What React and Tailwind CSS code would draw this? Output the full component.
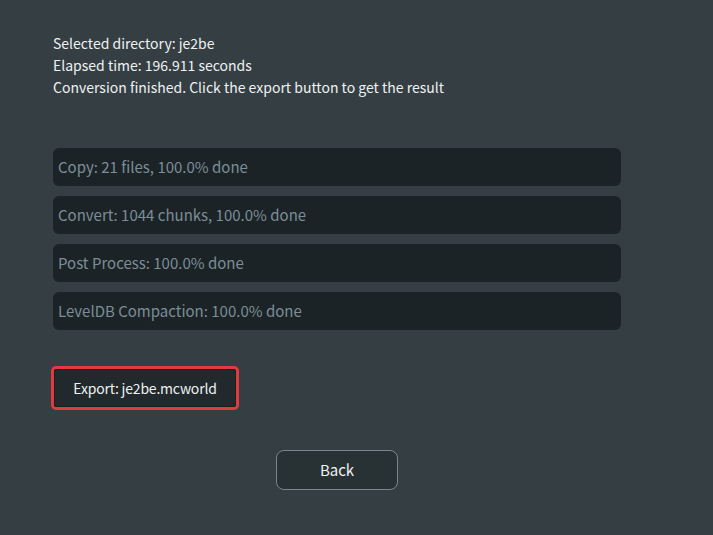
import React from 'react';

// Pasos de la conversión
const STEPS = [
  'Copy: 21 files, 100.0% done',
  'Convert: 1044 chunks, 100.0% done',
  'Post Process: 100.0% done',
  'LevelDB Compaction: 100.0% done',
];

const App = () => {
  return (
    <div
      className="w-[713px] h-[535px] bg-[#353f43] text-[#eef1f2] text-[14px] overflow-hidden"
      style={{ fontFamily: '"Noto Sans CJK JP", "Noto Sans", sans-serif' }}
    >
      <div className="pl-[53px] pt-[32px]">
        {/* Estado */}
        <div className="leading-[22px]">
          <div>Selected directory: je2be</div>
          <div>Elapsed time: 196.911 seconds</div>
          <div>Conversion finished. Click the export button to get the result</div>
        </div>

        {/* Progreso */}
        <div className="mt-[50px] w-[568px] flex flex-col gap-[10px]">
          {STEPS.map((s) => (
            <div
              key={s}
              className="h-[38px] rounded-[6px] bg-[#1c2326] flex items-center px-[5px] text-[15px] text-[#7b8e98]"
            >
              {s}
            </div>
          ))}
        </div>

        {/* Exportar */}
        <div className="mt-[36px] -ml-[2px] w-[188px] h-[44px] rounded-[5px] border-[3px] border-[#e0393e]">
          <button className="w-full h-full bg-[#22292c] border border-[#1a1f21] rounded-[2px] text-[#eef1f2] text-[14px] tracking-[-0.2px]">
            Export: je2be.mcworld
          </button>
        </div>

        {/* Volver */}
        <div className="mt-[40px] w-[568px] flex justify-center">
          <button className="w-[122px] h-[40px] rounded-[8px] bg-[#283134] border border-[#7b8689] text-[15px] text-[#eef1f2]">
            Back
          </button>
        </div>
      </div>
    </div>
  );
};

export default App;
